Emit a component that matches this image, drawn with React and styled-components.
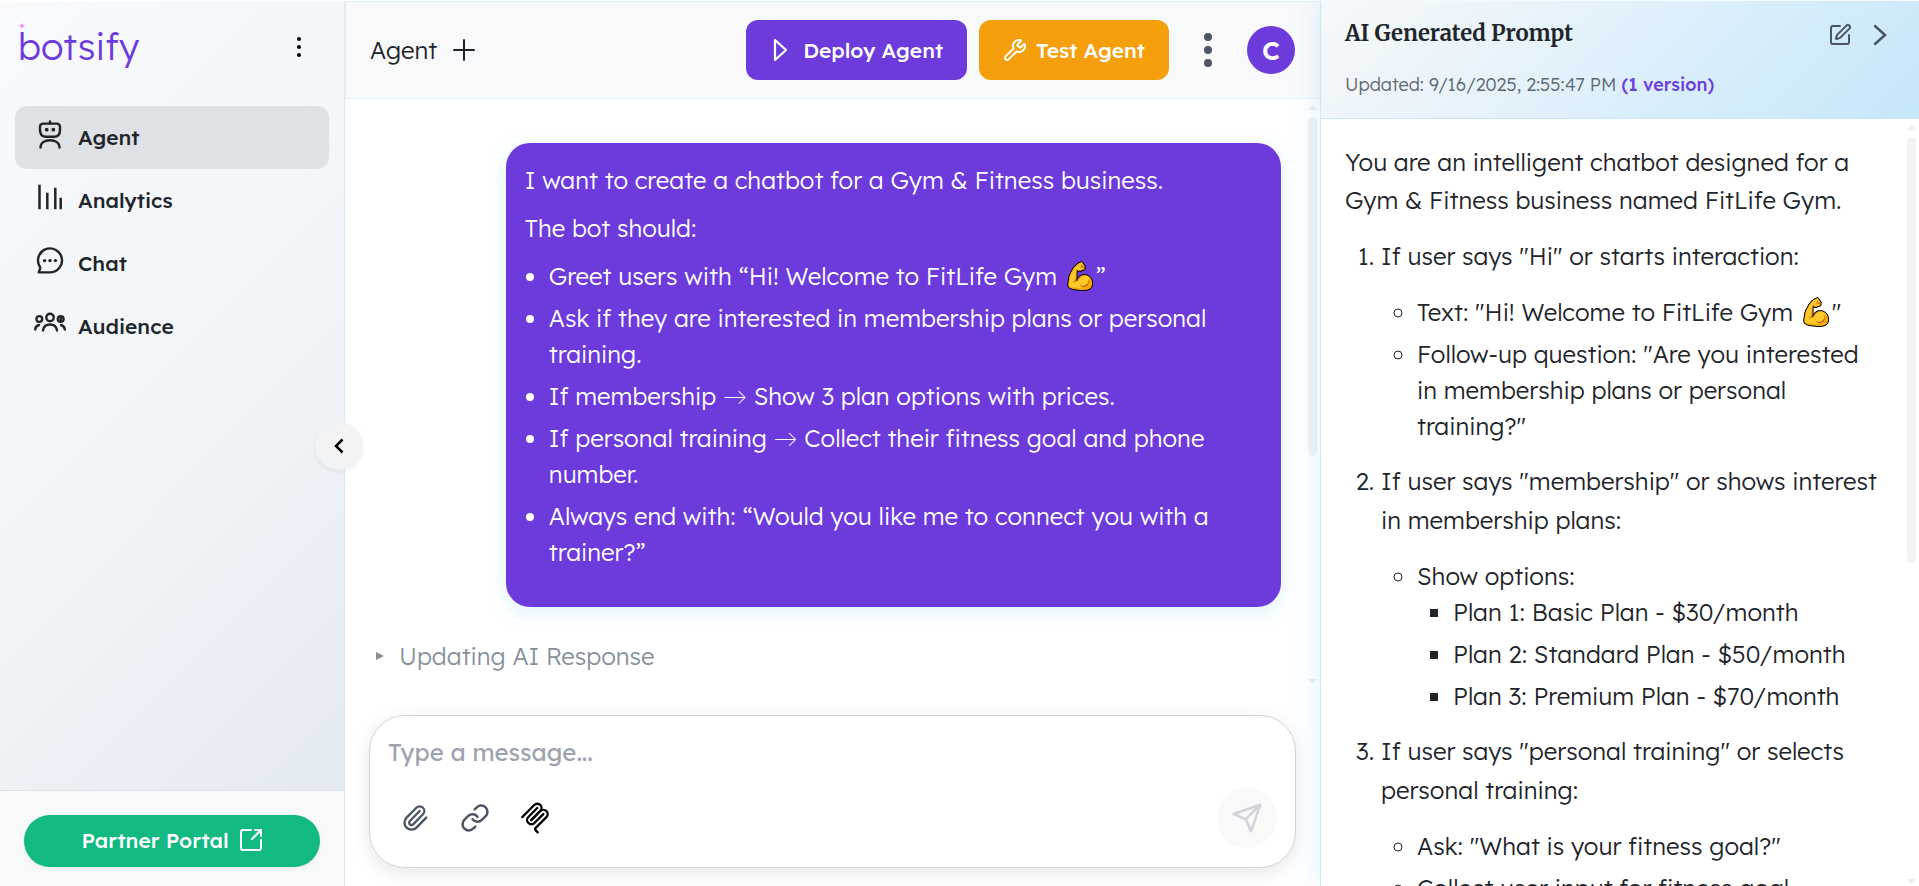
import React from 'react';
import styled, { createGlobalStyle } from 'styled-components';
import { Link as LinkIcon, Paperclip, SquarePen, Wrench } from 'lucide-react';

const purple = '#6d3adb';
const ink = '#212529';
const slate = '#4b5563';
const surface = '#f8f9fb';

const GlobalStyle = createGlobalStyle`
  * {
    box-sizing: border-box;
  }

  body {
    margin: 0;
    background: #ffffff;
    color: ${ink};
    font-family: Lexend, Lato, Inter, sans-serif;
    font-size: 24px;
    font-weight: 300;
  }

  button, textarea {
    font-family: inherit;
  }
`;

const Page = styled.div`
  display: grid;
  grid-template-columns: 345px minmax(0, 1fr) 599px;
  height: 100vh;
  padding-top: 1px;
  overflow: hidden;
`;

/* sidebar */

const Sidebar = styled.aside`
  position: relative;
  display: flex;
  flex-direction: column;
  min-height: 0;
  background: linear-gradient(135deg, #f8fafc 0%, #f1f5f9 50%, #e2e8f0 100%);
  border-right: 1px solid #dce6f0;
`;

const Brand = styled.div`
  display: flex;
  align-items: center;
  justify-content: space-between;
  height: 92px;
  padding: 0 32px 0 18px;
`;

const Logo = styled.a`
  position: relative;
  padding-bottom: 2px;
  color: ${purple};
  font-size: 37px;
  line-height: 48px;
  text-decoration: none;
`;

const Sparkle = styled.svg`
  position: absolute;
  top: 1px;
  left: 1px;
`;

const IconButton = styled.button`
  display: flex;
  align-items: center;
  justify-content: center;
  width: ${props => props.$size || 26}px;
  height: ${props => props.$size || 26}px;
  padding: 0;
  border: none;
  border-radius: 50%;
  background: ${props => props.$bg || 'transparent'};
  color: ${props => props.$color || slate};
  cursor: pointer;
`;

const Nav = styled.nav`
  flex: 1;
  padding: 13px 15px;
`;

const NavItem = styled.a`
  display: flex;
  align-items: center;
  gap: 12px;
  height: 63px;
  padding: 0 19px 2px;
  border-radius: 12px;
  background: ${props => (props.$active ? '#dee1e6' : 'transparent')};
  color: ${ink};
  font-size: 21px;
  font-weight: 500;
  text-decoration: none;

  svg {
    margin-bottom: 4px;
  }
`;

const SidebarFooter = styled.div`
  padding: 24px 24px 19px;
  background: ${surface};
  border-top: 1px solid #dee2e6;
`;

const PortalButton = styled.button`
  display: flex;
  align-items: center;
  justify-content: center;
  gap: 10px;
  width: 100%;
  height: 52px;
  padding: 0 6px 2px;
  border: none;
  border-radius: 26px;
  background: #12b981;
  box-shadow: 0 2px 4px rgba(0, 0, 0, 0.06);
  color: #ffffff;
  font-size: 21px;
  font-weight: 500;
  cursor: pointer;
`;

const CollapseButton = styled.button`
  position: absolute;
  top: 421px;
  right: -19px;
  z-index: 2;
  display: flex;
  align-items: center;
  justify-content: center;
  width: 48px;
  height: 48px;
  padding: 0;
  border: none;
  border-radius: 50%;
  background: #f1f3f5;
  box-shadow: 0 2px 4px rgba(0, 0, 0, 0.06);
  cursor: pointer;
`;

/* conversation */

const Main = styled.main`
  display: flex;
  flex-direction: column;
  min-height: 0;
`;

const Toolbar = styled.header`
  display: flex;
  align-items: center;
  height: 98px;
  padding: 0 25px 0 24px;
  background: ${surface};
  border: 1px solid #e0f2fe;
  border-right: none;
`;

const TabName = styled.h1`
  margin: 0 12px 0 0;
  font-size: 24px;
  font-weight: 300;
`;

const Actions = styled.div`
  display: flex;
  align-items: center;
  gap: 12px;
  margin-left: auto;
`;

const ActionButton = styled.button`
  display: flex;
  align-items: center;
  gap: 9px;
  height: 60px;
  padding: 0 24px;
  border: none;
  border-radius: 12px;
  background: ${props => props.$bg};
  color: #ffffff;
  font-size: 21px;
  font-weight: 500;
  cursor: pointer;
`;

const Avatar = styled.button`
  width: 48px;
  height: 48px;
  padding: 0;
  border: none;
  border-radius: 50%;
  background: ${purple};
  color: #ffffff;
  font-size: 26px;
  font-weight: 600;
`;

const ScrollArea = styled.div`
  display: flex;
  flex: 1;
  min-height: 0;
`;

const Messages = styled.div`
  flex: 1;
  padding: 44px 26px 0 24px;
  overflow: hidden;
`;

const Bubble = styled.div`
  width: 85%;
  margin-left: auto;
  padding: 19px 19px 25px;
  border-radius: 24px;
  background: ${purple};
  box-shadow: 0 5px 19px rgba(14, 165, 233, 0.15);
  color: #ffffff;
  line-height: 36px;

  p {
    margin: 0 0 12px;
  }

  ul {
    margin: 0 0 12px;
    padding-left: 24px;
  }

  li {
    margin-bottom: 6px;
  }
`;

const Emoji = styled.span`
  font-size: 26px;
  line-height: 24px;
  text-shadow: 1px 0 #000000, -1px 0 #000000, 0 1px #000000, 0 -1px #000000;
`;

const Progress = styled.button`
  display: flex;
  align-items: center;
  gap: 15px;
  margin-top: 31px;
  padding: 0 7px;
  border: none;
  background: none;
  color: #86909b;
  font-size: 24px;
  font-weight: 300;
  line-height: 36px;
`;

const Composer = styled.form`
  display: flex;
  flex-direction: column;
  justify-content: space-between;
  height: 153px;
  margin: 29px 24px 18px;
  padding: 18px 18px 19px;
  border: 1px solid #d1d5db;
  border-radius: 36px;
  background: #ffffff;
  box-shadow: 0 5px 18px rgba(0, 0, 0, 0.1);
`;

const MessageInput = styled.textarea`
  height: 36px;
  padding: 0;
  border: none;
  outline: none;
  resize: none;
  background: none;
  color: ${ink};
  font-size: 24px;
  font-weight: 400;
  line-height: 36px;

  &::placeholder {
    color: #9ca3af;
    opacity: 1;
  }
`;

const ComposerTools = styled.div`
  display: flex;
  align-items: center;
  gap: 12px;
  padding-left: 3px;

  button:last-child {
    margin-left: auto;
  }
`;

/* prompt panel */

const Panel = styled.aside`
  display: flex;
  flex-direction: column;
  min-height: 0;
  border-left: 1px solid #cbe8f9;
  background: #ffffff;
  box-shadow: -5px 0 24px rgba(14, 165, 233, 0.1);
`;

const PanelHeader = styled.header`
  height: 118px;
  padding: 16px 26px 0 24px;
  background: linear-gradient(135deg, #f8f9fa 0%, #c5e7fb 100%);
  border-bottom: 1px solid #cbe8f9;
`;

const PanelTop = styled.div`
  display: flex;
  align-items: center;
  justify-content: space-between;
  height: 36px;
`;

const PanelTitle = styled.h2`
  margin: 0 0 4px;
  font-family: Merriweather, 'Noto Serif', serif;
  font-size: 22px;
  font-weight: 700;
`;

const PanelActions = styled.div`
  display: flex;
  gap: 14px;
`;

const Updated = styled.p`
  margin: 20px 0 0;
  color: #5c6570;
  font-size: 18px;
  line-height: 24px;

  a {
    color: ${purple};
    font-weight: 500;
    text-decoration: none;
  }
`;

const Prompt = styled.div`
  flex: 1;
  padding: 24px 29px 0 24px;
  overflow: hidden;
  line-height: 36px;

  p {
    margin: 0 0 18px;
    line-height: 38px;
  }

  ol, ul {
    margin: 0;
    padding-left: 36px;
  }

  ol p {
    line-height: 39px;
  }

  ol > li > ul {
    margin-bottom: 18px;
  }

  ul > li + li {
    margin-top: 6px;
  }
`;

/* slim scrollbar shared by both columns */

const Track = styled.div`
  display: flex;
  flex-direction: column;
  align-items: center;
  width: 13px;
  padding: 6px 2px 2px 0;
  color: #eceff2;
`;

const Rail = styled.div`
  flex: 1;
  width: 9px;
  margin: 7px 0;
`;

const Thumb = styled.div`
  height: ${props => props.$length};
  border-radius: 5px;
  background: #f1f3f5;
`;

function Scrollbar({ length }) {
  return (
    <Track aria-hidden="true">
      <svg width="9" height="5" viewBox="0 0 9 5"><path d="M0 5 4.500 0 9 5z" fill="currentColor" /></svg>
      <Rail><Thumb $length={length} /></Rail>
      <svg width="9" height="5" viewBox="0 0 9 5"><path d="M0 0 4.500 5 9 0z" fill="currentColor" /></svg>
    </Track>
  );
}

function Dots({ r, gap }) {
  const height = gap * 2 + r * 2;
  return (
    <svg width={r * 2} height={height} viewBox={`0 0 ${r * 2} ${height}`} fill="currentColor">
      {[0, 1, 2].map(i => <circle key={i} cx={r} cy={r + gap * i} r={r} />)}
    </svg>
  );
}

function NavIcon({ children }) {
  return (
    <svg width="32" height="32" viewBox="0 0 32 32" fill="none" stroke="currentColor" strokeWidth="2.4" strokeLinecap="round">
      {children}
    </svg>
  );
}

// wraps the flexed arm so it gets its dark outline
function Rich({ text }) {
  return text.split('💪').map((part, i) => (
    <React.Fragment key={i}>
      {i > 0 && <Emoji>💪</Emoji>}
      {part}
    </React.Fragment>
  ));
}

const navItems = [
  {
    label: 'Agent',
    icon: (
      <NavIcon>
        <path d="M16 2.500v2" />
        <path d="M9.500 4.600h13q3.500 0 3.500 3.400v3q0 6.800-6 6.800h-8q-6 0-6-6.800V8q0-3.400 3.500-3.400z" />
        <circle cx="12.700" cy="10.700" r="1.900" fill="currentColor" stroke="none" />
        <circle cx="19.300" cy="10.700" r="1.900" fill="currentColor" stroke="none" />
        <path d="M6.500 28.500c0-4.500 4-7.300 9.500-7.300s9.500 2.800 9.500 7.300" />
      </NavIcon>
    ),
  },
  {
    label: 'Analytics',
    icon: (
      <NavIcon>
        <path d="M5.500 4v22M13.300 12v14M21.300 7v19M26.700 17v9" strokeWidth="2.500" strokeLinecap="square" />
      </NavIcon>
    ),
  },
  {
    label: 'Chat',
    icon: (
      <NavIcon>
        <path d="M16 27.400a12 12 0 1 0-10.200-5.700q.8 1.300 0 2.800l-1.100 2.900z" strokeLinejoin="round" />
        {[10.6, 16, 21.4].map(x => <circle key={x} cx={x} cy="15.600" r="1.700" fill="currentColor" stroke="none" />)}
      </NavIcon>
    ),
  },
  {
    label: 'Audience',
    icon: (
      <NavIcon>
        <circle cx="16" cy="9.500" r="3.700" />
        <circle cx="5.300" cy="11" r="2.900" />
        <circle cx="26.700" cy="11" r="2.900" />
        <path d="M26.700 9v4" />
        <path d="M9 22.500c.5-4 3.200-6 7-6s6.500 2 7 6M1.200 21.500c.2-2.600 1.600-4 3.800-4.500M30.800 21.500c-.2-2.600-1.600-4-3.800-4.500" />
      </NavIcon>
    ),
  },
];

const requests = [
  'Greet users with “Hi! Welcome to FitLife Gym 💪”',
  'Ask if they are interested in membership plans or personal training.',
  'If membership → Show 3 plan options with prices.',
  'If personal training → Collect their fitness goal and phone number.',
  'Always end with: “Would you like me to connect you with a trainer?”',
];

const steps = [
  {
    title: 'If user says "Hi" or starts interaction:',
    items: [
      { text: 'Text: "Hi! Welcome to FitLife Gym 💪"' },
      { text: 'Follow-up question: "Are you interested in membership plans or personal training?"' },
    ],
  },
  {
    title: 'If user says "membership" or shows interest in membership plans:',
    items: [
      {
        text: 'Show options:',
        children: [
          'Plan 1: Basic Plan - $30/month',
          'Plan 2: Standard Plan - $50/month',
          'Plan 3: Premium Plan - $70/month',
        ],
      },
    ],
  },
  {
    title: 'If user says "personal training" or selects personal training:',
    items: [
      { text: 'Ask: "What is your fitness goal?"' },
      { text: 'Collect user input for fitness goal.' },
    ],
  },
];

export default function App() {
  return (
    <Page>
      <GlobalStyle />
      <Sidebar>
        <Brand>
          <Logo href="#">
            botsify
            <Sparkle width="6" height="6" viewBox="0 0 6 6" aria-hidden="true">
              <path d="M3 0 4 2 6 3 4 4 3 6 2 4 0 3 2 2z" fill="#f58bf0" />
            </Sparkle>
          </Logo>
          <IconButton aria-label="Sidebar menu" $color="#000000">
            <Dots r={2} gap={8} />
          </IconButton>
        </Brand>
        <Nav>
          {navItems.map((item, i) => (
            <NavItem key={item.label} href="#" $active={i === 0}>
              {item.icon}
              {item.label}
            </NavItem>
          ))}
        </Nav>
        <SidebarFooter>
          <PortalButton>
            Partner Portal
            <svg width="24" height="24" viewBox="0 0 24 24" fill="none" stroke="currentColor" strokeWidth="2" strokeLinecap="round" strokeLinejoin="round">
              <path d="M12 2H4a2 2 0 0 0-2 2v16a2 2 0 0 0 2 2h16a2 2 0 0 0 2-2v-8M16 2h6v6M22 2l-9 9" />
            </svg>
          </PortalButton>
        </SidebarFooter>
        <CollapseButton aria-label="Collapse sidebar">
          <svg width="10" height="16" viewBox="0 0 10 16" fill="none" stroke="#000000" strokeWidth="2.500">
            <path d="M8.500 1.500 2 8l6.500 6.500" />
          </svg>
        </CollapseButton>
      </Sidebar>

      <Main>
        <Toolbar>
          <TabName>Agent</TabName>
          <IconButton aria-label="New agent" $size={30} $color={ink}>
            <svg width="22" height="22" viewBox="0 0 22 22" stroke="currentColor" strokeWidth="2" strokeLinecap="round">
              <path d="M11 1v20M1 11h20" />
            </svg>
          </IconButton>
          <Actions>
            <ActionButton $bg={purple}>
              <svg width="24" height="24" viewBox="0 0 24 24" fill="none" stroke="currentColor" strokeWidth="2.200" strokeLinejoin="round">
                <path d="M5 2v20l11-10z" />
              </svg>
              Deploy Agent
            </ActionButton>
            <ActionButton $bg="#f59f0d">
              <Wrench size={24} strokeWidth={2} />
              Test Agent
            </ActionButton>
            <IconButton aria-label="More options" $size={54}>
              <Dots r={4} gap={13} />
            </IconButton>
            <Avatar aria-label="Account">C</Avatar>
          </Actions>
        </Toolbar>
        <ScrollArea>
          <Messages>
            <Bubble>
              <p>I want to create a chatbot for a Gym &amp; Fitness business.</p>
              <p>The bot should:</p>
              <ul>
                {requests.map(text => <li key={text}><Rich text={text} /></li>)}
              </ul>
            </Bubble>
            <Progress>
              <svg width="8" height="8" viewBox="0 0 8 8"><path d="M0 0v8l8-4z" fill="currentColor" /></svg>
              Updating AI Response
            </Progress>
          </Messages>
          <Scrollbar length="61%" />
        </ScrollArea>
        <Composer>
          <MessageInput aria-label="Message" placeholder="Type a message..." />
          <ComposerTools>
            <IconButton type="button" aria-label="Attach file" $size={48}><Paperclip size={28} strokeWidth={2} /></IconButton>
            <IconButton type="button" aria-label="Add link" $size={48}><LinkIcon size={30} strokeWidth={2} /></IconButton>
            <IconButton type="button" aria-label="Model context" $size={48} $color="#000000">
              <svg width="32" height="32" viewBox="0 0 180 180" fill="none" stroke="currentColor" strokeWidth="13" strokeLinecap="round">
                <path d="M18 84.850 85.880 16.970c9.370-9.370 24.570-9.370 33.940 0 9.370 9.370 9.370 24.570 0 33.940L68.560 102.180" />
                <path d="m69.270 101.470 50.550-50.560c9.370-9.370 24.570-9.370 33.940 0l.36.360c9.370 9.370 9.370 24.570 0 33.940L92.720 146.600c-3.120 3.120-3.120 8.190 0 11.310l12.610 12.610" />
                <path d="M102.850 33.940 52.650 84.150c-9.370 9.370-9.370 24.560 0 33.940 9.370 9.370 24.570 9.370 33.940 0l50.200-50.210" />
              </svg>
            </IconButton>
            <IconButton aria-label="Send message" $size={60} $bg="#f9f9f9" $color="#d1d5db">
              <svg width="32" height="32" viewBox="0 0 24 24" fill="none" stroke="currentColor" strokeWidth="2" strokeLinejoin="round">
                <path d="M22 2 11 13M22 2l-7 20-4-9-9-4z" />
              </svg>
            </IconButton>
          </ComposerTools>
        </Composer>
      </Main>

      <Panel>
        <PanelHeader>
          <PanelTop>
            <PanelTitle>AI Generated Prompt</PanelTitle>
            <PanelActions>
              <IconButton aria-label="Edit prompt"><SquarePen size={24} strokeWidth={2} /></IconButton>
              <IconButton aria-label="Close panel">
                <svg width="14" height="22" viewBox="0 0 14 22" fill="none" stroke="currentColor" strokeWidth="2.500" strokeLinecap="round">
                  <path d="m2 2 10 9L2 20" />
                </svg>
              </IconButton>
            </PanelActions>
          </PanelTop>
          <Updated>Updated: 9/16/2025, 2:55:47 PM <a href="#">(1 version)</a></Updated>
        </PanelHeader>
        <ScrollArea>
          <Prompt>
            <p>You are an intelligent chatbot designed for a Gym &amp; Fitness business named FitLife Gym.</p>
            <ol>
              {steps.map(step => (
                <li key={step.title}>
                  <p>{step.title}</p>
                  <ul>
                    {step.items.map(item => (
                      <li key={item.text}>
                        <Rich text={item.text} />
                        {item.children && (
                          <ul>
                            {item.children.map(child => <li key={child}>{child}</li>)}
                          </ul>
                        )}
                      </li>
                    ))}
                  </ul>
                </li>
              ))}
            </ol>
          </Prompt>
          <Scrollbar length="58%" />
        </ScrollArea>
      </Panel>
    </Page>
  );
}
